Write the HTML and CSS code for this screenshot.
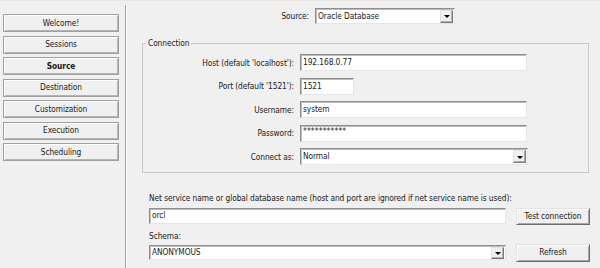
FILE: index.html
```html
<!DOCTYPE html>
<html>
<head>
<meta charset="utf-8">
<link rel="stylesheet" href="styles.css">
</head>
<body>
<div class="app">
  <nav class="sidebar">
    <div class="navbtn">Welcome!</div>
    <div class="navbtn">Sessions</div>
    <div class="navbtn active">Source</div>
    <div class="navbtn">Destination</div>
    <div class="navbtn">Customization</div>
    <div class="navbtn">Execution</div>
    <div class="navbtn">Scheduling</div>
  </nav>
  <div class="sep"></div>
  <main class="content">
    <div class="source-row">
      <span class="source-label">Source:</span>
      <div class="field select source-select"><span class="val">Oracle Database</span><span class="arrow"><i></i></span></div>
    </div>
    <fieldset class="group">
      <legend>Connection</legend>
      <div class="grid">
        <label>Host (default 'localhost'):</label>
        <div class="field w-long"><span class="val">192.168.0.77</span></div>
        <label>Port (default '1521'):</label>
        <div class="field w-port"><span class="val">1521</span></div>
        <label>Username:</label>
        <div class="field w-long"><span class="val">system</span></div>
        <label>Password:</label>
        <div class="field w-long"><span class="val pw">***********</span></div>
        <label>Connect as:</label>
        <div class="field select w-sel"><span class="val">Normal</span><span class="arrow"><i></i></span></div>
      </div>
    </fieldset>
    <div class="bottom">
      <div class="net-label">Net service name or global database name (host and port are ignored if net service name is used):</div>
      <div class="bottom-row r1">
        <div class="field net-input"><span class="val">orcl</span></div>
        <div class="btn test">Test connection</div>
      </div>
      <div class="schema-label">Schema:</div>
      <div class="bottom-row r2">
        <div class="field select schema-select"><span class="val">ANONYMOUS</span><span class="arrow"><i></i></span></div>
        <div class="btn refresh">Refresh</div>
      </div>
    </div>
  </main>
</div>
</body>
</html>
```
FILE: styles.css
```css
html, body {
  margin: 0;
  padding: 0;
}
body {
  background: #f0f0f0;
  font-family: "DejaVu Sans Condensed", "DejaVu Sans", sans-serif;
  font-size: 8.3px;
  letter-spacing: -0.08px;
  color: #1a1a1a;
  width: 600px;
  height: 268px;
  overflow: hidden;
}
.app {
  display: flex;
  height: 267px;
  border-top: 1px solid #e9e5e1;
}
.sidebar {
  width: 123px;
  padding: 13px 0 0 3px;
  display: flex;
  flex-direction: column;
  gap: 3.5px;
}
.navbtn {
  box-sizing: border-box;
  width: 116px;
  height: 18px;
  border: 1px solid #a0a0a0;
  box-shadow: inset 1px 1px 0 #fff, inset -1px -1px 0 #b4b4b4;
  background: #f0f0f0;
  display: flex;
  align-items: center;
  justify-content: center;
  line-height: 1;
}
.navbtn.active {
  font-weight: bold;
}
.sep {
  width: 1px;
  margin-top: 4px;
  background: #a0a0a0;
  box-shadow: 1px 0 0 #fff;
}
.content {
  flex: 1;
  padding: 7px 10px 0 16px;
}
.source-row {
  display: flex;
  align-items: center;
  gap: 6px;
  height: 16px;
}
.source-label {
  width: 167px;
  text-align: right;
}
.field {
  box-sizing: border-box;
  height: 17px;
  background: #fff;
  border: 1px solid;
  border-color: #8e8e8e #e6e6e6 #e6e6e6 #8e8e8e;
  box-shadow: inset 1px 1px 0 #bdbdbd;
  display: flex;
  align-items: center;
  line-height: 1;
}
.val {
  padding-left: 2px;
  flex: 1;
  white-space: nowrap;
}
.val.pw {
  position: relative;
  top: -2px;
  letter-spacing: 0.2px;
}
.select {
  padding-right: 1px;
}
.arrow {
  box-sizing: border-box;
  width: 13px;
  height: 13px;
  background: #f0f0f0;
  border: 1px solid;
  border-color: #e3e3e3 #7a7a7a #7a7a7a #e3e3e3;
  box-shadow: inset -1px -1px 0 #b0b0b0;
  display: flex;
  align-items: center;
  justify-content: center;
}
.arrow i {
  display: block;
  width: 0;
  height: 0;
  border-left: 3px solid transparent;
  border-right: 3px solid transparent;
  border-top: 3px solid #000;
  margin-top: 1px;
}
.source-select {
  width: 140px;
  height: 16px;
}
.group {
  margin: 14px 0 0 0;
  padding: 5px 0 7px 0;
  border: 1px solid #c9c9c9;
  box-sizing: border-box;
  width: 447px;
  min-width: 0;
}
.group legend {
  padding: 0 2px;
  margin-left: 3px;
  line-height: 11px;
}
.grid {
  display: grid;
  grid-template-columns: 151px auto;
  column-gap: 6px;
  row-gap: 6.5px;
  align-items: center;
  justify-items: start;
}
.grid label {
  justify-self: end;
}
.w-long { width: 227px; }
.w-port { width: 54px; }
.w-sel { width: 228px; }
.bottom {
  padding-left: 7px;
  margin-top: 20px;
}
.net-label, .schema-label {
  line-height: 11px;
  white-space: nowrap;
}
.bottom-row {
  display: flex;
  align-items: center;
  gap: 10px;
}
.r1 {
  margin-top: 3.5px;
  align-items: flex-start;
}
.schema-label {
  margin-top: 6px;
}
.r2 {
  margin-top: 2px;
}
.net-input {
  width: 357px;
  height: 16px;
}
.schema-select {
  width: 357px;
  height: 15px;
}
.schema-select .arrow {
  height: 12px;
}
.btn {
  box-sizing: border-box;
  width: 74px;
  background: #f0f0f0;
  border: 1px solid;
  border-color: #e3e3e3 #6e6e6e #6e6e6e #e3e3e3;
  box-shadow: inset 1px 1px 0 #fff, inset -1px -1px 0 #a8a8a8;
  display: flex;
  align-items: center;
  justify-content: center;
  line-height: 1;
}
.test { height: 17px; }
.refresh { height: 18px; }
```
